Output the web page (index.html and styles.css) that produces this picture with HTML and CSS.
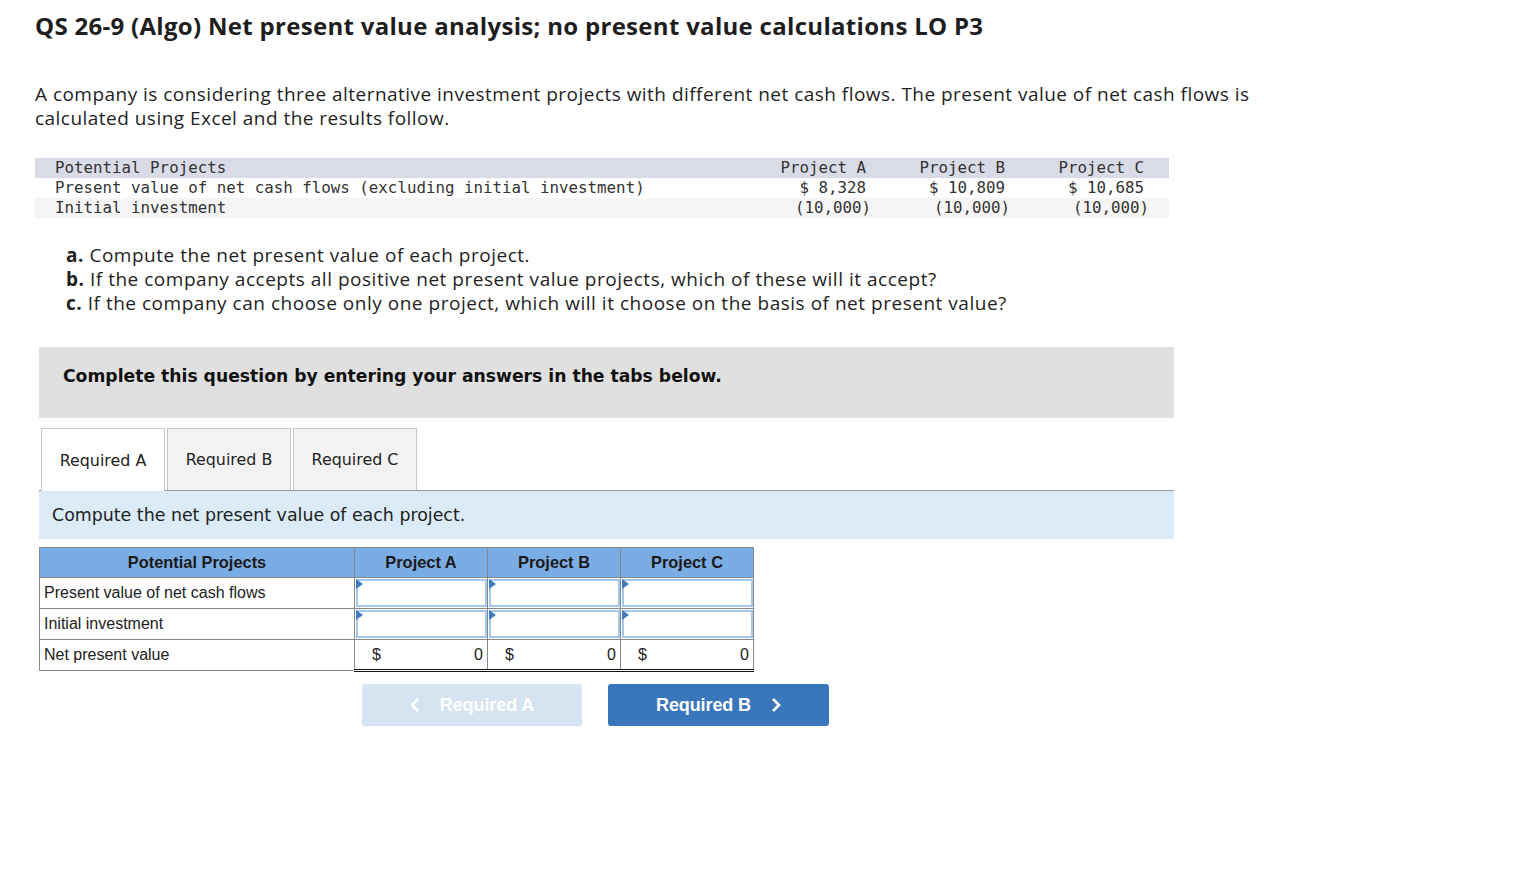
FILE: index.html
```html
<!DOCTYPE html>
<html lang="en">
<head>
<meta charset="utf-8">
<title>QS 26-9 (Algo) Net present value analysis</title>
<link rel="stylesheet" href="styles.css">
</head>
<body>
<div class="page">
  <h1 class="title">QS 26-9 (Algo) Net present value analysis; no present value calculations LO P3</h1>
  <p class="intro">A company is considering three alternative investment projects with different net cash flows. The present value of net cash flows is calculated using Excel and the results follow.</p>

  <table class="data">
    <tr class="row-head">
      <td class="lbl">Potential Projects</td>
      <td class="num">Project A</td>
      <td class="num">Project B</td>
      <td class="num">Project C</td>
    </tr>
    <tr class="row-plain">
      <td class="lbl">Present value of net cash flows (excluding initial investment)</td>
      <td class="num">$ 8,328</td>
      <td class="num">$ 10,809</td>
      <td class="num">$ 10,685</td>
    </tr>
    <tr class="row-alt">
      <td class="lbl">Initial investment</td>
      <td class="num neg">(10,000)</td>
      <td class="num neg">(10,000)</td>
      <td class="num neg">(10,000)</td>
    </tr>
  </table>

  <ol class="reqs">
    <li><b>a.</b> Compute the net present value of each project.</li>
    <li><b>b.</b> If the company accepts all positive net present value projects, which of these will it accept?</li>
    <li><b>c.</b> If the company can choose only one project, which will it choose on the basis of net present value?</li>
  </ol>

  <div class="notice">Complete this question by entering your answers in the tabs below.</div>

  <div class="tabs">
    <div class="tab active">Required A</div>
    <div class="tab">Required B</div>
    <div class="tab">Required C</div>
  </div>
  <div class="instr">Compute the net present value of each project.</div>

  <table class="answer">
    <tr>
      <th class="col-lbl">Potential Projects</th>
      <th class="col-num">Project A</th>
      <th class="col-num">Project B</th>
      <th class="col-num">Project C</th>
    </tr>
    <tr>
      <td class="lbl">Present value of net cash flows</td>
      <td class="inp"><div class="box"></div></td>
      <td class="inp"><div class="box"></div></td>
      <td class="inp"><div class="box"></div></td>
    </tr>
    <tr>
      <td class="lbl">Initial investment</td>
      <td class="inp"><div class="box"></div></td>
      <td class="inp"><div class="box"></div></td>
      <td class="inp"><div class="box"></div></td>
    </tr>
    <tr>
      <td class="lbl">Net present value</td>
      <td class="tot"><span>$</span><span>0</span></td>
      <td class="tot"><span>$</span><span>0</span></td>
      <td class="tot"><span>$</span><span>0</span></td>
    </tr>
  </table>

  <div class="nav">
    <button class="btn prev" type="button"><svg class="chev" width="10" height="16" viewBox="0 0 10 16"><polyline points="8,2 2,8 8,14" fill="none" stroke="#ffffff" stroke-width="2.6"/></svg>Required A</button>
    <button class="btn next" type="button">Required B<svg class="chev" width="10" height="16" viewBox="0 0 10 16"><polyline points="2,2 8,8 2,14" fill="none" stroke="#ffffff" stroke-width="2.6"/></svg></button>
  </div>
</div>
</body>
</html>
```
FILE: styles.css
```css
html, body {
  margin: 0;
  padding: 0;
  background: #ffffff;
}

.page {
  padding: 11px 0 40px 35px;
  font-family: "Open Sans", "Liberation Sans", sans-serif;
  color: #1f1f1f;
}

.title {
  margin: 0;
  font-size: 24px;
  line-height: 30px;
  font-weight: 700;
  color: #1e1e1e;
  letter-spacing: 0.3px;
}

.intro {
  margin: 41px 0 0 0;
  width: 1240px;
  font-size: 19px;
  line-height: 24px;
  letter-spacing: 0.47px;
}

.data {
  margin-top: 28px;
  width: 1134px;
  border-collapse: collapse;
  font-family: "DejaVu Sans Mono", "Liberation Mono", monospace;
  font-size: 15.8px;
  color: #333;
}

.data td {
  height: 20px;
  padding: 0;
  line-height: 20px;
  white-space: pre;
}

.data .lbl {
  padding-left: 20px;
}

.data .num {
  width: 114px;
  padding-right: 25px;
  text-align: right;
}

.data .neg {
  padding-right: 20px;
}

.row-head {
  background: #d9dce6;
}

.row-alt {
  background: #f5f5f5;
}

.reqs {
  list-style: none;
  margin: 25px 0 0 0;
  padding: 0 0 0 31px;
  font-size: 19px;
  line-height: 24px;
  letter-spacing: 0.52px;
}

.reqs b {
  font-weight: 700;
}

.notice {
  margin: 32px 0 0 4px;
  width: 1111px;
  padding: 18px 0 31px 24px;
  background: #e0e0e0;
  font-family: "DejaVu Sans", Verdana, sans-serif;
  font-weight: 700;
  font-size: 17.2px;
  line-height: 22px;
  color: #111;
}

.tabs {
  display: flex;
  gap: 2px;
  margin: 10px 0 0 6px;
  position: relative;
  z-index: 1;
}

.tab {
  width: 122px;
  height: 61px;
  border: 1px solid #c8c8c8;
  border-bottom: none;
  background: #f2f2f2;
  display: flex;
  align-items: center;
  justify-content: center;
  font-family: "DejaVu Sans", Verdana, sans-serif;
  font-size: 15.9px;
  color: #222;
}

.tab.active {
  background: #ffffff;
  height: 62px;
  margin-bottom: -1px;
}

.instr {
  margin-left: 4px;
  width: 1122px;
  height: 48px;
  border-top: 1px solid #999;
  padding-left: 13px;
  background: #dbebf8;
  display: flex;
  align-items: center;
  font-family: "DejaVu Sans", Verdana, sans-serif;
  font-size: 17.4px;
  color: #222;
}

.answer {
  margin: 8px 0 0 4px;
  border-collapse: collapse;
  font-family: "Liberation Sans", Arial, sans-serif;
  font-size: 16px;
  color: #222;
}

.answer th {
  height: 29px;
  padding: 0;
  background: #7aade3;
  border: 1px solid #888;
  font-weight: 700;
  font-size: 16.4px;
  color: #1a1a1a;
}

.answer .col-lbl {
  width: 314px;
}

.answer .col-num {
  width: 132px;
}

.answer td {
  height: 30px;
  padding: 0;
  border: 1px solid #888;
}

.answer .lbl {
  padding-left: 4px;
}

.answer .inp {
  padding: 1px 0 1px 1px;
  height: 28px;
}

.box {
  position: relative;
  height: 24px;
  border: 2px solid #a7c7ea;
  background: #fff;
}

.box::before {
  content: "";
  position: absolute;
  left: -2px;
  top: -2px;
  border-top: 5px solid transparent;
  border-bottom: 5px solid transparent;
  border-left: 7px solid #3d7cc2;
}

.answer .tot {
  border-bottom: 3px double #111;
  padding: 0 4px 0 17px;
  height: 28px;
}

.tot {
  white-space: nowrap;
}

.answer .tot span:last-child {
  float: right;
}

.nav {
  display: flex;
  gap: 26px;
  margin: 12px 0 0 327px;
}

.btn {
  width: 221px;
  height: 42px;
  border: none;
  border-radius: 3px;
  font-family: "Liberation Sans", Arial, sans-serif;
  font-size: 18px;
  font-weight: 700;
  color: #ffffff;
  display: flex;
  align-items: center;
  justify-content: center;
  gap: 20px;
  letter-spacing: -0.1px;
}

.btn.prev {
  width: 220px;
  background: #d6e3f1;
}

.btn.next {
  background: #3a76bb;
}

.chev {
  display: block;
}
```
